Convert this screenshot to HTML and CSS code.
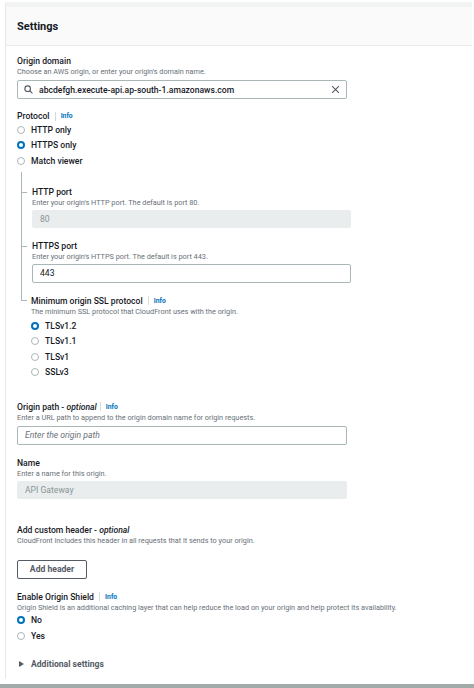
FILE: index.html
```html
<!DOCTYPE html>
<html>
<head>
<meta charset="utf-8">
<link rel="stylesheet" href="styles.css">
</head>
<body>
<div class="card">
  <div class="card-header"><h2>Settings</h2></div>
  <div class="card-body">

    <div class="field f-domain">
      <div class="label">Origin domain</div>
      <div class="desc">Choose an AWS origin, or enter your origin's domain name.</div>
      <div class="input search">
        <svg class="ico-search" width="9" height="9" viewBox="0 0 16 16"><circle cx="6.5" cy="6.5" r="5" fill="none" stroke="#545b64" stroke-width="2"/><path d="M10.2 10.2 L15 15" stroke="#545b64" stroke-width="2"/></svg>
        <span class="value">abcdefgh.execute-api.ap-south-1.amazonaws.com</span>
        <svg class="ico-x" width="9" height="9" viewBox="0 0 16 16"><path d="M2 2 L14 14 M14 2 L2 14" stroke="#545b64" stroke-width="2"/></svg>
      </div>
    </div>

    <div class="field f-protocol">
      <div class="label">Protocol <span class="sep"></span><span class="info">Info</span></div>
      <div class="radios">
        <div class="radio"><span class="dot"></span>HTTP only</div>
        <div class="radio"><span class="dot on"></span>HTTPS only</div>
        <div class="radio"><span class="dot"></span>Match viewer</div>
      </div>
    </div>

    <div class="tree">
      <div class="branch b-http">
        <div class="label">HTTP port</div>
        <div class="desc">Enter your origin's HTTP port. The default is port 80.</div>
        <div class="input sub disabled">80</div>
      </div>
      <div class="branch b-https">
        <div class="label">HTTPS port</div>
        <div class="desc">Enter your origin's HTTPS port. The default is port 443.</div>
        <div class="input sub">443</div>
      </div>
      <div class="branch last b-ssl">
        <div class="label">Minimum origin SSL protocol <span class="sep"></span><span class="info">Info</span></div>
        <div class="desc">The minimum SSL protocol that CloudFront uses with the origin.</div>
        <div class="radios">
          <div class="radio"><span class="dot on"></span>TLSv1.2</div>
          <div class="radio"><span class="dot"></span>TLSv1.1</div>
          <div class="radio"><span class="dot"></span>TLSv1</div>
          <div class="radio"><span class="dot"></span>SSLv3</div>
        </div>
      </div>
    </div>

    <div class="field f-path">
      <div class="label">Origin path - <i>optional</i> <span class="sep"></span><span class="info">Info</span></div>
      <div class="desc">Enter a URL path to append to the origin domain name for origin requests.</div>
      <div class="input placeholder">Enter the origin path</div>
    </div>

    <div class="field f-name">
      <div class="label">Name</div>
      <div class="desc">Enter a name for this origin.</div>
      <div class="input disabled">API Gateway</div>
    </div>

    <div class="field f-header">
      <div class="label">Add custom header - <i>optional</i></div>
      <div class="desc">CloudFront includes this header in all requests that it sends to your origin.</div>
      <div class="btn">Add header</div>
    </div>

    <div class="field f-shield">
      <div class="label">Enable Origin Shield <span class="sep"></span><span class="info">Info</span></div>
      <div class="desc">Origin Shield is an additional caching layer that can help reduce the load on your origin and help protect its availability.</div>
      <div class="radios">
        <div class="radio"><span class="dot on"></span>No</div>
        <div class="radio"><span class="dot"></span>Yes</div>
      </div>
    </div>

    <div class="expander"><span class="caret"></span>Additional settings</div>
  </div>
</div>
<div class="bottom-bar"></div>
</body>
</html>
```

FILE: styles.css
```css
html, body {
  margin: 0;
  padding: 0;
  background: #ffffff;
}
body {
  font-family: Roboto, "Noto Sans", sans-serif;
  color: #16191f;
  width: 474px;
  height: 688px;
  overflow: hidden;
  display: flex;
  flex-direction: column;
}
.card {
  margin: 2px 2px 0 5px;
  border-top: 5px solid #f2f3f3;
  border-left: 1px solid #e4e7e7;
  height: 677px;
  box-sizing: border-box;
}
.card-header {
  background: #fafafa;
  border-bottom: 1px solid #eaeded;
  height: 38px;
  display: flex;
  align-items: center;
  padding-left: 11px;
}
.card-header h2 {
  margin: 0;
  font-size: 11px;
  font-weight: 700;
  color: #16191f;
}
.card-body {
  padding: 9px 0 0 11px;
}
.label {
  font-size: 8.6px;
  line-height: 12px;
  font-weight: 500;
  color: #16191f;
  display: flex;
  align-items: center;
  white-space: pre;
}
.label i {
  font-weight: 500;
}
.sep {
  display: inline-block;
  width: 1px;
  height: 9px;
  background: #d5dbdb;
  margin: 0 5px 0 3px;
}
.info {
  color: #0073bb;
  font-size: 6.8px;
  font-weight: 700;
}
.desc {
  font-size: 7.3px;
  line-height: 10px;
  color: #687078;
  white-space: nowrap;
}
.input {
  margin-top: 2px;
  width: 330px;
  height: 19px;
  box-sizing: border-box;
  border: 1px solid #aab7b8;
  border-radius: 2px;
  font-size: 8.6px;
  display: flex;
  align-items: center;
  padding: 0 7px;
  color: #16191f;
}
.f-domain .input { margin-top: 3px; }
.f-path .input { margin-top: 3px; }
.input.sub {
  width: 319px;
}
.input.disabled {
  height: 18px;
  background: #eaeded;
  border-color: #eaeded;
  color: #879596;
}
.input.placeholder {
  color: #687078;
  font-style: italic;
}
.input.search {
  padding: 0 6px;
  gap: 6px;
}
.input.search .value {
  flex: 1;
  font-weight: 500;
}
.radios {
  display: flex;
  flex-direction: column;
}
.radio {
  height: 15.5px;
  display: flex;
  align-items: center;
  font-size: 8.6px;
  font-weight: 500;
  color: #16191f;
}
.dot {
  width: 8px;
  height: 8px;
  box-sizing: border-box;
  border: 1px solid #aab7b8;
  border-radius: 50%;
  margin-right: 6px;
}
.dot.on {
  border: 2.6px solid #0073bb;
  background: #fff;
}
.f-protocol { margin-top: 11px; }

.tree {
  margin-left: 4px;
  margin-top: 3px;
  display: flex;
  flex-direction: column;
}
.branch {
  position: relative;
  padding-left: 10px;
  border-left: 1px solid #aab7b8;
}
.branch::before {
  content: "";
  position: absolute;
  left: 0;
  width: 5px;
  border-top: 1px solid #aab7b8;
}
.b-http { padding-top: 14px; }
.b-http::before { top: 20px; }
.b-https { padding-top: 12px; }
.b-https::before { top: 18px; }
.b-ssl {
  padding-top: 12px;
  border-left: none;
}
.b-ssl::before {
  top: 0;
  left: 0;
  height: 17px;
  border-left: 1px solid #aab7b8;
  border-bottom: 1px solid #aab7b8;
  border-top: none;
  width: 5px;
}
.b-ssl .radios { margin-top: 2px; }
.b-ssl .radio { height: 15.3px; }

.f-path { margin-top: 21px; }
.f-name { margin-top: 12px; }
.f-header { margin-top: 25px; }
.f-shield { margin-top: 12px; }

.btn {
  margin-top: 14px;
  width: 70px;
  height: 19px;
  box-sizing: border-box;
  border: 1px solid #545b64;
  border-radius: 2px;
  display: flex;
  align-items: center;
  justify-content: center;
  font-size: 8.6px;
  font-weight: 700;
  color: #545b64;
}

.expander {
  margin-top: 14px;
  height: 12px;
  font-size: 8.6px;
  font-weight: 700;
  color: #545b64;
  display: flex;
  align-items: center;
  padding-left: 2px;
}
.caret {
  width: 0;
  height: 0;
  border-left: 5px solid #545b64;
  border-top: 3.5px solid transparent;
  border-bottom: 3.5px solid transparent;
  margin-right: 7px;
}
.bottom-bar {
  margin-top: auto;
  height: 4px;
  background: #a3aaaa;
}
```
